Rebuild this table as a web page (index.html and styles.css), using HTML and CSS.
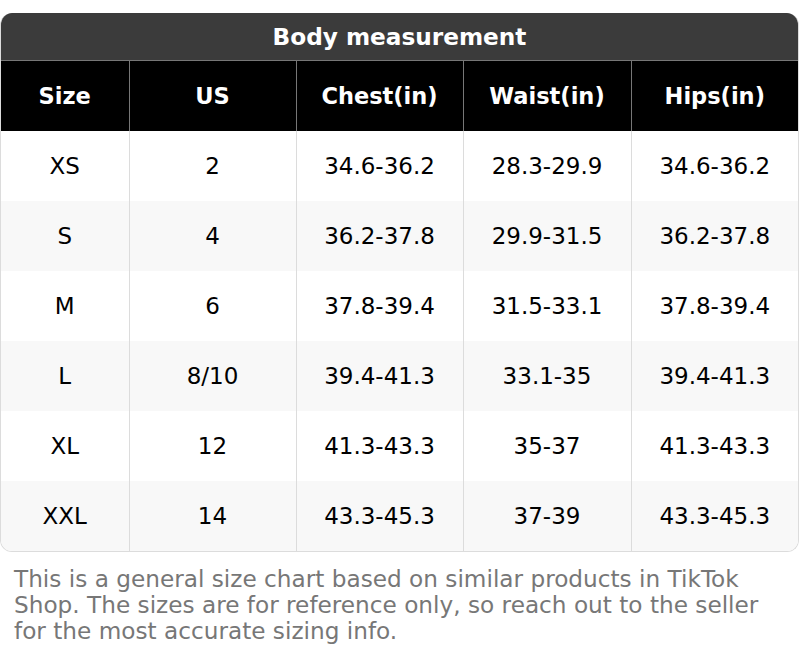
FILE: index.html
```html
<!DOCTYPE html>
<html>
<head>
<meta charset="utf-8">
<link rel="stylesheet" href="styles.css">
</head>
<body>
<div class="chart">
  <div class="title">Body measurement</div>
  <table class="grid">
    <colgroup>
      <col class="c1"><col class="c2"><col class="c3"><col class="c4"><col class="c5">
    </colgroup>
    <thead>
      <tr><th>Size</th><th>US</th><th>Chest(in)</th><th>Waist(in)</th><th>Hips(in)</th></tr>
    </thead>
    <tbody>
      <tr><td>XS</td><td>2</td><td>34.6-36.2</td><td>28.3-29.9</td><td>34.6-36.2</td></tr>
      <tr><td>S</td><td>4</td><td>36.2-37.8</td><td>29.9-31.5</td><td>36.2-37.8</td></tr>
      <tr><td>M</td><td>6</td><td>37.8-39.4</td><td>31.5-33.1</td><td>37.8-39.4</td></tr>
      <tr><td>L</td><td>8/10</td><td>39.4-41.3</td><td>33.1-35</td><td>39.4-41.3</td></tr>
      <tr><td>XL</td><td>12</td><td>41.3-43.3</td><td>35-37</td><td>41.3-43.3</td></tr>
      <tr><td>XXL</td><td>14</td><td>43.3-45.3</td><td>37-39</td><td>43.3-45.3</td></tr>
    </tbody>
  </table>
</div>
<p class="note">This is a general size chart based on similar products in TikTok Shop. The sizes are for reference only, so reach out to the seller for the most accurate sizing info.</p>
</body>
</html>
```

FILE: styles.css
```css
html, body {
  margin: 0;
  padding: 0;
  background: #fff;
}
body {
  font-family: "DejaVu Sans", sans-serif;
  padding-top: 13px;
}
.chart {
  width: 799px;
  border: 1px solid #dcdcdc;
  border-top: none;
  border-radius: 12px;
  overflow: hidden;
  box-sizing: border-box;
}
.title {
  background: #3b3b3b;
  color: #fff;
  font-weight: bold;
  font-size: 23.2px;
  text-align: center;
  height: 47px;
  line-height: 47px;
}
.grid {
  width: 100%;
  border-collapse: collapse;
  table-layout: fixed;
}
.c1 { width: 128px; }
.c2 { width: 167px; }
.c3 { width: 167px; }
.c4 { width: 168px; }
.grid th {
  background: #000;
  color: #fff;
  font-weight: bold;
  font-size: 22.5px;
  height: 70px;
  padding: 0;
  border-top: 1px solid #777;
  border-left: 1px solid #777;
}
.grid th:first-child { border-left: none; }
.grid td {
  font-size: 23px;
  color: #000;
  text-align: center;
  height: 70px;
  padding: 0;
  border-left: 1px solid #dcdcdc;
}
.grid td:first-child { border-left: none; }
.grid tbody tr:nth-child(even) td { background: #f8f8f8; }
.note {
  margin: 14px 0 0;
  padding: 0 14px;
  font-size: 23.2px;
  line-height: 26px;
  color: #777;
}
```
